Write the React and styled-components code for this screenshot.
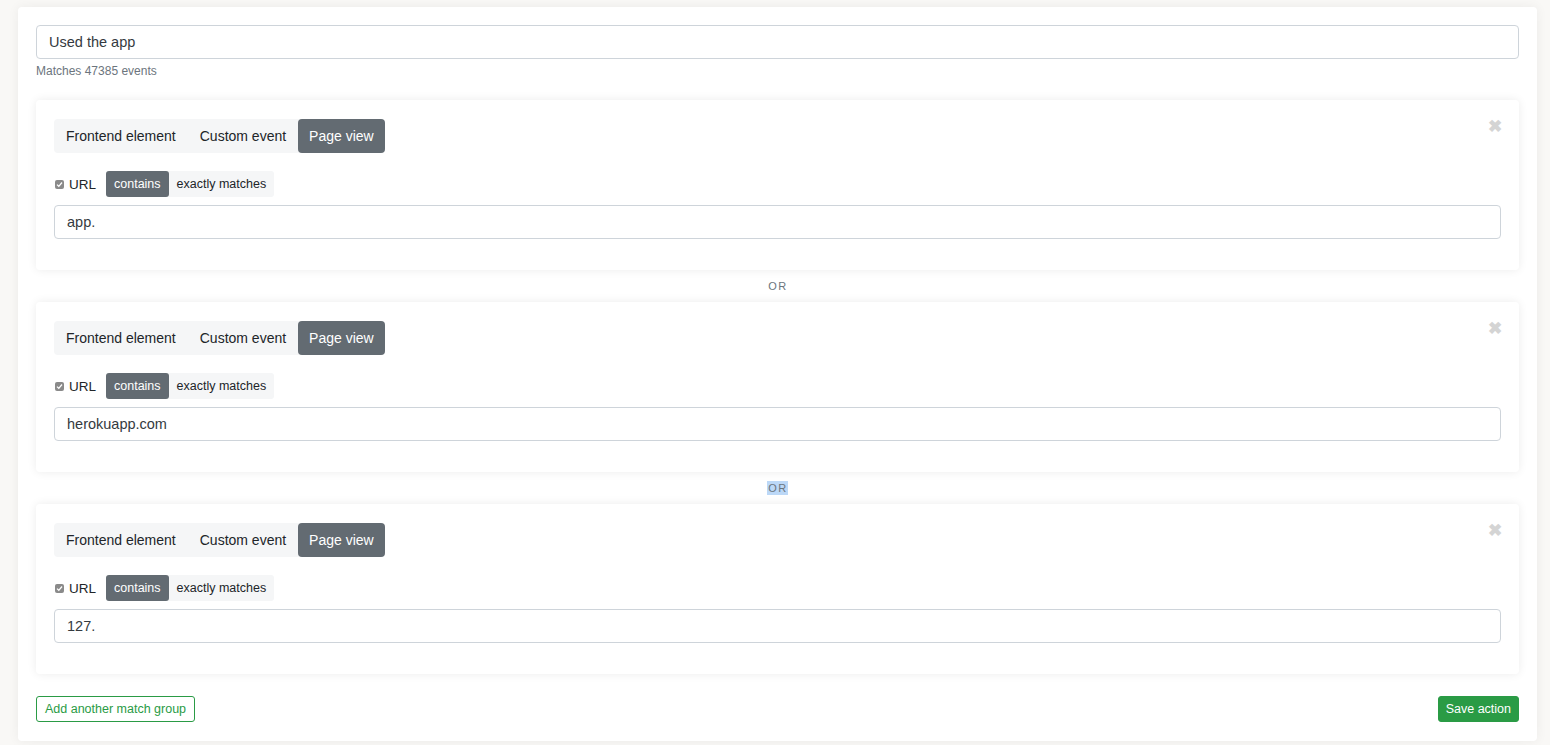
import React from 'react';
import styled, { createGlobalStyle } from 'styled-components';

// grey #636b72 for active toggles, green #28a745 for actions

const GlobalStyle = createGlobalStyle`
    html, body {
        margin: 0;
        padding: 0;
        background: #f9f8f6;
        font-family: "Liberation Sans", Arial, sans-serif;
        color: #212529;
    }
`

const Page = styled.div`
    padding: 7px 13px 4px 18px;
`

const Card = styled.div`
    background: #fff;
    border-radius: 4px;
    box-shadow: 0 0 12px rgba(0, 0, 0, 0.06);
    padding: 18px 18px 19px 18px;
`

const TextInput = styled.input`
    display: block;
    box-sizing: border-box;
    width: 100%;
    height: 34px;
    padding: 0 12px;
    font-family: "Liberation Sans", Arial, sans-serif;
    font-size: 14.5px;
    color: #343a40;
    background: #fff;
    border: 1px solid #ced4da;
    border-radius: 4px;
    outline: none;
`

const Hint = styled.div`
    font-size: 12px;
    line-height: 14px;
    color: #6c757d;
    margin-top: 5px;
`

const Groups = styled.div`
    margin-top: 22px;
`

const GroupCard = styled.div`
    position: relative;
    background: #fff;
    border-radius: 4px;
    box-shadow: 0 0 10px rgba(0, 0, 0, 0.08);
    padding: 19px 18px 31px 18px;
`

const Close = styled.span`
    position: absolute;
    top: 18px;
    right: 17px;
    font-size: 17px;
    font-weight: bold;
    color: #d4d4d4;
    line-height: 1;
`

const Tabs = styled.div`
    display: inline-flex;
    background: #f5f6f7;
    border-radius: 4px;
`

const Tab = styled.div`
    height: 34px;
    padding: 0 ${props => props.active ? '11px' : '12px'};
    display: flex;
    align-items: center;
    font-size: 14px;
    border-radius: 4px;
    color: ${props => props.active ? '#fff' : '#212529'};
    background: ${props => props.active ? '#636b72' : 'transparent'};
`

const UrlRow = styled.div`
    display: flex;
    align-items: center;
    margin-top: 18px;
    margin-bottom: 8px;
`

const Check = styled.span`
    width: 9px;
    height: 9px;
    margin-left: 1px;
    border-radius: 2px;
    background: #8a8a8a;
    display: flex;
    align-items: center;
    justify-content: center;
`

const Label = styled.span`
    font-size: 13.5px;
    margin-left: 5px;
    margin-right: 10px;
`

const Toggles = styled.div`
    display: flex;
    background: #f5f6f7;
    border-radius: 3px;
`

const Toggle = styled.div`
    height: 26px;
    padding: 0 8px;
    display: flex;
    align-items: center;
    font-size: 12.5px;
    border-radius: 3px;
    color: ${props => props.active ? '#fff' : '#212529'};
    background: ${props => props.active ? '#636b72' : 'transparent'};
`

const Or = styled.div`
    height: 32px;
    display: flex;
    align-items: center;
    justify-content: center;
    font-size: 11px;
    letter-spacing: 1.5px;
    color: #6c757d;
`

const Selected = styled.span`
    background: ${props => props.on ? '#bcd8f7' : 'transparent'};
    padding: 1px 0 1px 1px;
`

const Footer = styled.div`
    display: flex;
    justify-content: space-between;
    margin-top: 22px;
`

const Button = styled.button`
    height: 26px;
    padding: 0 ${props => props.filled ? '7px' : '8px'};
    font-family: "Liberation Sans", Arial, sans-serif;
    font-size: 12.5px;
    border-radius: 3px;
    border: 1px solid #2a9b45;
    color: ${props => props.filled ? '#fff' : '#2a9b45'};
    background: ${props => props.filled ? '#2a9b45' : '#fff'};
`

const groups = ['app.', 'herokuapp.com', '127.'];

function MatchGroup({ url }) {
    return (
        <GroupCard>
            <Close>✖</Close>
            <Tabs>
                <Tab>Frontend element</Tab>
                <Tab>Custom event</Tab>
                <Tab active>Page view</Tab>
            </Tabs>
            <UrlRow>
                <Check>
                    <svg width="7" height="7" viewBox="0 0 7 7">
                        <path d="M1 3.6 L2.8 5.3 L6 1.5" stroke="#fff" strokeWidth="1.3" fill="none" />
                    </svg>
                </Check>
                <Label>URL</Label>
                <Toggles>
                    <Toggle active>contains</Toggle>
                    <Toggle>exactly matches</Toggle>
                </Toggles>
            </UrlRow>
            <TextInput defaultValue={url} />
        </GroupCard>
    )
}

export default function App() {
    return (
        <Page>
            <GlobalStyle />
            <Card>
                <TextInput defaultValue="Used the app" />
                <Hint>Matches 47385 events</Hint>
                <Groups>
                    {groups.map((url, i) => (
                        <React.Fragment key={url}>
                            {i > 0 && <Or><Selected on={i === 2}>OR</Selected></Or>}
                            <MatchGroup url={url} />
                        </React.Fragment>
                    ))}
                </Groups>
                <Footer>
                    <Button>Add another match group</Button>
                    <Button filled>Save action</Button>
                </Footer>
            </Card>
        </Page>
    )
}
